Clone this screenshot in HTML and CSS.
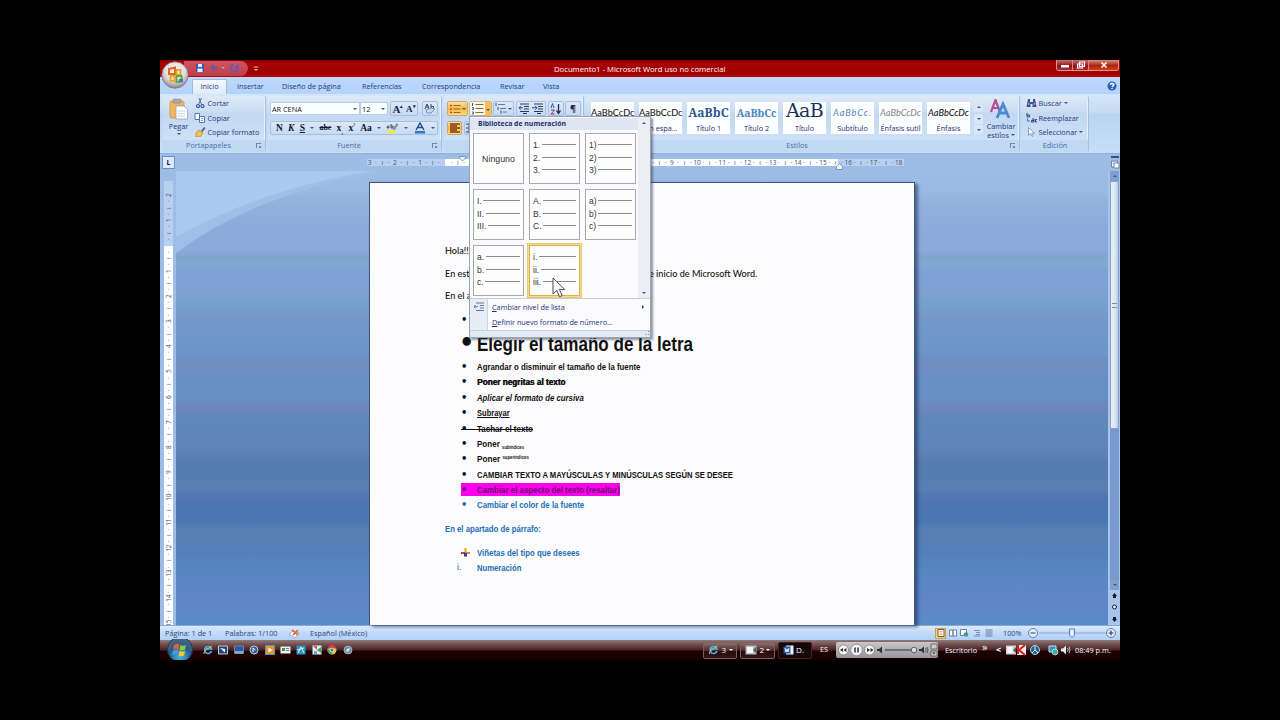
FILE: index.html
```html
<!DOCTYPE html>
<html lang="es">
<head>
  <meta charset="UTF-8">
  <title>Documento1 - Microsoft Word</title>
  <link rel="stylesheet" href="styles.css">
</head>
<body>
  <div class="desktop">
    <div class="orb">
      <svg width="30" height="30" viewBox="0 0 30 30">
        <defs><radialGradient id="orb" cx=".5" cy=".35" r=".65"><stop offset="0" stop-color="#fff"/><stop offset=".6" stop-color="#dcdce4"/><stop offset="1" stop-color="#8a8494"/></radialGradient></defs>
        <circle cx="15" cy="15" r="13.2" fill="url(#orb)" stroke="#9a6a70" stroke-width=".8"/>
        <g fill="none" stroke-width="2"><path d="M9 9l6-1.500v6.500h-6z" stroke="#e8641c"/><path d="M16.500 10h4v5h-4z" stroke="#f0a020"/><path d="M10.500 16h4v5h-4z" stroke="#e8b020"/><path d="M16.500 16h5v5.500l-5 .5z" stroke="#62a83a"/></g>
        <path d="M19 19h4v3h-4z" fill="#3f7fc8"/>
      </svg>
    </div>

    <div class="titlebar">
      <div class="quick">
        <svg width="60" height="12" viewBox="0 0 60 12">
          <path d="M3 2h8v8h-8z" fill="#3b57b8"/><path d="M5 2h4v3h-4zM4.500 6.500h5v3.500h-5z" fill="#e9eefc"/>
          <path d="M17 5l3.500-3v2c4 0 5 3 3 5.500 0-2.500-1-2.500-3-2.500v2z" fill="#6659a8"/><path d="M28 5h4l-2 2z" fill="#cf9aa6"/>
          <path d="M40.500 2.500c-3.500.5-4 6 0 7s5.500-3 3.500-5.500M45 1.500v3.500h-3.500" fill="none" stroke="#665aac" stroke-width="1.800"/>
        </svg>
      </div>
      <svg class="quick-more" width="6" height="6" viewBox="0 0 6 6"><path d="M1 1h4" stroke="#e9b8b8"/><path d="M1 3h4l-2 2z" fill="#e9b8b8"/></svg>
      <div class="title">Documento1 - Microsoft Word uso no comercial</div>
      <div class="winbtns">
        <span class="wb"><svg width="10" height="8" viewBox="0 0 10 8"><path d="M1 4h8v2.500h-8z" fill="#fff"/></svg></span>
        <span class="wb"><svg width="10" height="8" viewBox="0 0 10 8"><path d="M3.500 1h5v4.500h-5zM1.500 3h5v4h-5z" fill="#a33" stroke="#fff" stroke-width="1.200"/></svg></span>
        <span class="wb close"><svg width="10" height="8" viewBox="0 0 10 8"><path d="M2.500 1.500l5 5M7.500 1.500l-5 5" stroke="#fff" stroke-width="1.700"/></svg></span>
      </div>
    </div>

    <div class="tabs">
      <span class="tab active">Inicio</span>
      <span class="tab t2">Insertar</span>
      <span class="tab t3">Diseño de página</span>
      <span class="tab t4">Referencias</span>
      <span class="tab t5">Correspondencia</span>
      <span class="tab t6">Revisar</span>
      <span class="tab t7">Vista</span>
      <svg class="help" width="10" height="10" viewBox="0 0 10 10"><circle cx="5" cy="5" r="4.500" fill="#2f62bd"/><path d="M3 3.500q2-2 4 0l-2 2.500M5 7v1" stroke="#fff" stroke-width="1.300" fill="none"/></svg>
    </div>

    <div class="ribbon">
      <div class="group g-clip">
        <div class="body">
          <div class="paste">
            <svg width="22" height="23" viewBox="0 0 22 23"><rect x="2" y="3" width="14" height="17" rx="1.500" fill="#f0b65a" stroke="#c98a3a" stroke-width=".7"/><rect x="5" y="1" width="8" height="4" rx="1" fill="#a9a9b4" stroke="#77778a" stroke-width=".5"/><path d="M8 8h8l3.500 3.500v9.500h-11.500z" fill="#fbfcff" stroke="#8a9cc0" stroke-width=".7"/><path d="M10 13h7M10 15.500h7M10 18h7" stroke="#b9c6e0" stroke-width=".7"/></svg>
            <span>Pegar</span><i class="dn"></i>
          </div>
          <div class="list">
            <div><svg width="12" height="10" viewBox="0 0 12 10"><path d="M5 0l2.500 6.500M7.500 0l-3 6.500" stroke="#5a6f9c" fill="none"/><circle cx="4" cy="8" r="1.500" fill="none" stroke="#2b56b0" stroke-width="1.200"/><circle cx="8.500" cy="8" r="1.500" fill="none" stroke="#2b56b0" stroke-width="1.200"/></svg><span>Cortar</span></div>
            <div><svg width="12" height="10" viewBox="0 0 12 10"><path d="M1 .5h4.500v6h-4.500zM5.500 3.500h5v6h-5z" fill="#fff" stroke="#4a67a8" stroke-width=".9"/><path d="M7 5.500h2M7 7.500h2" stroke="#4a67a8" stroke-width=".7"/></svg><span>Copiar</span></div>
            <div class="fmt"><svg width="12" height="10" viewBox="0 0 12 10"><path d="M7 4l3-4 1.500 1-3 4z" fill="#5a5a70"/><path d="M2 6l3-3 4 3-3 4h-4z" fill="#f2c14a" stroke="#9b7a2a" stroke-width=".6"/></svg><span>Copiar formato</span></div>
          </div>
        </div>
        <div class="label">Portapapeles<b class="dlg"></b></div>
      </div>

      <div class="group g-font">
        <div class="row r1">
          <span class="combo name">AR CENA<i class="dn"></i></span>
          <span class="combo size">12<i class="dn"></i></span>
          <span class="box ab"><span class="serif big">A<sup>▴</sup></span><span class="serif small">A<sup>▾</sup></span></span>
          <span class="box clr"><svg width="14" height="11" viewBox="0 0 14 11"><path d="M2 6l2-5 2 5M3 4h3M8 1v5M8 3.500h2.500v2.500h-2.500" stroke="#3c4a6c" fill="none"/><path d="M3 7l5-2 4 1-4 4h-4z" fill="#cdd8ef" stroke="#5d76a8" stroke-width=".7"/></svg></span>
        </div>
        <div class="row r2">
          <span class="box biu">
            <b>N</b><b class="it">K</b><b class="un">S</b><i class="dn"></i><b class="st">abc</b><b>x<sub>₂</sub></b><b>x<sup>²</sup></b><b>Aa</b><i class="dn"></i>
            <svg width="13" height="12" viewBox="0 0 13 12"><path d="M1 5q2-3 2 1q-3 0-2-1M5 2v4h2v-2h-2" stroke="#333c58" fill="none" stroke-width=".9"/><path d="M6 7l5-6 1.500 1.500-4 6z" fill="#8a93a8"/><path d="M1 8.500h8v2.500h-8z" fill="#f6ee20"/></svg><i class="dn"></i>
            <svg width="12" height="12" viewBox="0 0 12 12"><path d="M2 8l4-7 4 7M4 5.500h4.500" stroke="#24458e" stroke-width="1.400" fill="none"/><path d="M1 9h10v2.500h-10z" fill="#2f7cc8"/></svg><i class="dn"></i>
          </span>
        </div>
        <div class="label">Fuente<b class="dlg"></b></div>
      </div>

      <div class="group g-par">
        <div class="row r1">
          <span class="pb hot bul"><svg width="12" height="10" viewBox="0 0 12 10"><path d="M1 1.500h2M1 5h2M1 8.500h2" stroke="#a4571a" stroke-width="1.600"/><path d="M4.500 1.500h7M4.500 5h7M4.500 8.500h7" stroke="#8d6a40"/></svg><i class="dn"></i></span>
          <span class="pb num"><svg width="14" height="12" viewBox="0 0 14 12"><path d="M1.500 0v3M1 4.500h1.500v2h-1.500M1 9h1.500v2h-1.500" stroke="#33508c" fill="none" stroke-width=".9"/><path d="M4.500 1.500h8M4.500 5.500h8M4.500 9.500h8" stroke="#6c6c60"/></svg><em><i class="dn"></i></em></span>
          <span class="pb mul"><svg width="13" height="11" viewBox="0 0 13 11"><path d="M1 0v3M3 4v3M6 7.500v3" stroke="#33508c"/><path d="M3 1.500h7M5 5.500h6M8 9h4" stroke="#6a7896"/></svg><i class="dn"></i></span>
          <span class="pb ind">
            <svg width="12" height="11" viewBox="0 0 12 11"><path d="M2 1h9M6 3.500h5M6 6h5M2 8.500h9M5 10.500h4" stroke="#2d3652" stroke-width="1.200"/><path d="M5 4.700h-4M3 2.800l-2 2 2 2" stroke="#2d4ea0" fill="none"/></svg>
            <svg width="12" height="11" viewBox="0 0 12 11"><path d="M2 1h9M6 3.500h5M6 6h5M2 8.500h9M5 10.500h4" stroke="#2d3652" stroke-width="1.200"/><path d="M0 4.700h5M3 2.800l2 2-2 2" stroke="#2d4ea0" fill="none"/></svg>
          </span>
          <span class="pb srt"><svg width="12" height="12" viewBox="0 0 12 12"><path d="M1 5l1.500-4.500 1.500 4.500" stroke="#2a55b4" fill="none"/><path d="M1 7h3.500l-3.500 4h3.500" stroke="#9a2c50" fill="none"/><path d="M8.500 1v9M6.500 7.500l2 3 2-3" stroke="#222c48" fill="none" stroke-width="1.300"/></svg></span>
          <span class="pb pil">¶</span>
        </div>
        <div class="row r2">
          <span class="pb hot sq"><svg width="12" height="11" viewBox="0 0 12 11"><path d="M1 1h10M1 3h7M1 5h10M1 7h7M1 9h10" stroke="#7c3a14" stroke-width="1.300"/></svg></span>
          <span class="pb sq plain"><svg width="12" height="11" viewBox="0 0 12 11"><path d="M1 1h10M3 3h6M1 5h10M3 7h6M1 9h10" stroke="#2d3652"/></svg></span>
        </div>
        <div class="label">&nbsp;</div>
      </div>

      <div class="group g-sty">
        <div class="body">
          <div class="tiles">
            <div class="tile"><p>AaBbCcDc</p><span>&nbsp;</span></div>
            <div class="tile"><p>AaBbCcDc</p><span>Sin espa...</span></div>
            <div class="tile h1"><p>AaBbC</p><span>Título 1</span></div>
            <div class="tile h2"><p>AaBbCc</p><span>Título 2</span></div>
            <div class="tile tt"><p>AaB</p><span>Título</span></div>
            <div class="tile sb"><p>AaBbCc.</p><span>Subtítulo</span></div>
            <div class="tile es"><p>AaBbCcDc</p><span>Énfasis sutil</span></div>
            <div class="tile em"><p>AaBbCcDc</p><span>Énfasis</span></div>
          </div>
          <div class="spin"><b><i class="up"></i></b><b><i class="dn"></i></b><b><i class="dn"></i></b></div>
          <div class="change">
            <svg width="24" height="21" viewBox="0 0 24 21"><path d="M2 13l4.500-12 4.500 12M3.500 9h6" fill="none" stroke="#b54c9c" stroke-width="2.200"/><path d="M8 19l6-14 6 14M10 14h8" fill="none" stroke="#4a8ad0" stroke-width="2.800"/></svg>
            <span>Cambiar</span><span>estilos <i class="dn"></i></span>
          </div>
        </div>
        <div class="label">Estilos<b class="dlg"></b></div>
      </div>

      <div class="group g-edit">
        <div class="list">
          <div><svg width="11" height="10" viewBox="0 0 11 10"><path d="M2 1h2v3h3v-3h2l1.500 8h-4v-3h-2v3h-4z" fill="#3d5590"/><path d="M2 6h1.500M7.500 6h1.500" stroke="#dfe9fa"/></svg><span>Buscar <i class="dn"></i></span></div>
          <div><svg width="11" height="10" viewBox="0 0 11 10"><path d="M1 0v4h2.500v-2h-2.500M6 6h2v3h-2.500v-1.500h2.500M11 6.500h-1.500v2.500h1.500" stroke="#33457c" fill="none"/><path d="M1.500 5.500v2.500h2.500" stroke="#3a7ad0" fill="none"/></svg><span>Reemplazar</span></div>
          <div><svg width="11" height="10" viewBox="0 0 11 10"><path d="M2.500 .5v8l2-2 1.500 3 1.200-.6-1.400-2.800h2.700z" fill="#fff" stroke="#7b8fb4" stroke-width=".8"/></svg><span>Seleccionar <i class="dn"></i></span></div>
        </div>
        <div class="label">Edición</div>
      </div>
    </div>

    <div class="hruler">
      <span class="tabsel">L</span>
      <div class="hscale" id="hscale"></div>
      <svg class="rbtn" width="10" height="16" viewBox="0 0 10 16"><path d="M1 2h8" stroke="#1f2f5c" stroke-width="1.500"/><path d="M1.500 6h6v6h-6z" fill="#e8f0fc" stroke="#7285a8"/><path d="M4 8h5v5h-5z" fill="#fff" stroke="#7285a8"/></svg>
      <svg class="mark m1" width="7" height="6" viewBox="0 0 7 6"><path d="M.5 .5h6v1.500l-3 3-3-3z" fill="#eef4fc" stroke="#6c82a8" stroke-width=".8"/></svg>
      <svg class="mark m2" width="7" height="7" viewBox="0 0 7 7"><path d="M.5 6.500v-3l3-3 3 3v3z" fill="#eef4fc" stroke="#6c82a8" stroke-width=".8"/></svg>
    </div>

    <div class="work">
      <div class="vruler"><div class="vscale" id="vscale"></div></div>
      <div class="canvas">
        <svg class="swoosh" width="210" height="86" viewBox="0 0 210 86"><path d="M0 0h210q-130 22-210 82z" fill="#9fbfe8"/><path d="M0 0h195q-110 18-195 66z" fill="#aac9ef"/></svg>
        <div class="page">
          <p class="cal hola">Hola!!</p>
          <p class="cal split"><span>En est</span><span class="tail">e inicio de Microsoft Word.</span></p>
          <p class="cal">En el a</p>
          <ul class="black">
            <li class="first"><i>•</i></li>
            <li class="large"><i>•</i><span data-w="216">Elegir el tamaño de la letra</span></li>
            <li class="l1"><i>•</i><span data-w="163">Agrandar o disminuir el tamaño de la fuente</span></li>
            <li class="l2"><i>•</i><span data-w="88">Poner negritas al texto</span></li>
            <li class="l3"><i>•</i><span data-w="107">Aplicar el formato de cursiva</span></li>
            <li class="l4"><i>•</i><span data-w="33">Subrayar</span></li>
            <li class="l5"><i>•</i><span data-w="56">Tachar el texto</span></li>
            <li><i>•</i><span data-w="47">Poner <small class="lo">subíndices</small></span></li>
            <li><i>•</i><span data-w="52">Poner <small class="hi">superíndices</small></span></li>
            <li class="l8"><i>•</i><span data-w="256">CAMBIAR TEXTO A MAYÚSCULAS Y MINÚSCULAS SEGÚN SE DESEE</span></li>
            <li class="l9"><i>•</i><span data-w="143">Cambiar el aspecto del texto (resaltar)</span></li>
            <li class="l10"><i>•</i><span data-w="107">Cambiar el color de la fuente</span></li>
          </ul>
          <p class="sec"><span data-w="96">En el apartado de párrafo:</span></p>
          <ul class="blue">
            <li class="l11"><i><svg width="9" height="9" viewBox="0 0 9 9"><path d="M3.500 0h2v4h-2z" fill="#e8a030"/><path d="M0 4h4.500v2h-4.500z" fill="#c83c3c"/><path d="M4.500 4h4.500v2h-4.500z" fill="#c8a020"/><path d="M3 5h3v3.500h-3z" fill="#343c9c"/></svg></i><span data-w="103">Viñetas del tipo que desees</span></li>
            <li class="l12"><i class="rom">i.</i><span data-w="44">Numeración</span></li>
          </ul>
        </div>
      </div>
      <div class="vbar">
        <b class="sbtn"><i class="up"></i></b>
        <div class="track"><div class="thumb"><u></u></div></div>
        <b class="sbtn"><i class="dn"></i></b>
        <svg width="9" height="35" viewBox="0 0 9 35"><path d="M2 6l2.500-3 2.500 3zM3 6h3v2h-3z" fill="#14203c"/><circle cx="4.500" cy="17" r="2" fill="#dfe9f8" stroke="#14203c"/><path d="M2 29l2.500 3 2.500-3zM3 27h3v2h-3z" fill="#14203c"/></svg>
      </div>
    </div>

    <div class="status">
      <span class="s1">Página: 1 de 1</span>
      <span class="s2">Palabras: 1/100</span>
      <svg class="s3" width="13" height="11" viewBox="0 0 13 11"><path d="M1 6l4-3 6 2-4 5z" fill="#fff" stroke="#8a8aa0" stroke-width=".7"/><path d="M4 2l6 5M10 2l-5 5" stroke="#e0602c" stroke-width="1.600"/></svg>
      <span class="s4">Español (México)</span>
      <div class="views">
        <b class="on"><svg width="8" height="8" viewBox="0 0 8 8"><path d="M1 .5h6v7h-6z" fill="#fff" stroke="#805818"/><path d="M2.500 2.500h3M2.500 4h3M2.500 5.500h3" stroke="#9c8050" stroke-width=".6"/></svg></b>
        <b><svg width="8" height="8" viewBox="0 0 8 8"><path d="M.5 1h3.500v6h-3.500zM4 1h3.500v6h-3.500z" fill="#fff" stroke="#6b7fa8"/></svg></b>
        <b><svg width="9" height="8" viewBox="0 0 9 8"><path d="M.5 .5h6v6h-6z" fill="#fff" stroke="#6b7fa8"/><circle cx="6" cy="5.500" r="2.300" fill="#4a9a78"/></svg></b>
        <b><svg width="8" height="8" viewBox="0 0 8 8"><path d="M1 1.500h6M3 3.500h4M3 5.500h4M1 7h6" stroke="#6b7fa8" stroke-width=".8"/></svg></b>
        <b><svg width="8" height="8" viewBox="0 0 8 8"><path d="M.5 1h7M.5 3h7M.5 5h7M.5 7h7" stroke="#5b6f98" stroke-width=".9"/></svg></b>
      </div>
      <span class="pct">100%</span>
      <svg class="zoom" width="90" height="12" viewBox="0 0 90 12"><path d="M12 6h68" stroke="#7d9ccc" stroke-width=".8"/><g fill="#e4eefb" stroke="#4d648f" stroke-width=".8"><circle cx="6" cy="6" r="4.500"/><circle cx="84" cy="6" r="4.500"/><path d="M42.500 2h5v6l-2.500 2.500-2.500-2.500z"/></g><path d="M3.500 6h5M81.500 6h5M84 3.500v5" stroke="#2c4474" stroke-width="1.200"/></svg>
    </div>

    <div class="taskbar">
      <div class="start"><svg width="30" height="22" viewBox="0 0 30 22">
        <defs><radialGradient id="st" cx=".5" cy=".8" r=".8"><stop offset="0" stop-color="#48b8e0"/><stop offset=".55" stop-color="#275a88"/><stop offset="1" stop-color="#56687c"/></radialGradient></defs>
        <circle cx="15" cy="10.500" r="12.500" fill="url(#st)" stroke="#26344c"/>
        <path d="M9 6q3-2 5.500-.5l-1 5q-3-1.500-5.500 0z" fill="#e8602c"/><path d="M15.500 6q3 1.500 5.500 0l-1 4.500q-2.500 1.500-5.500.5z" fill="#8cc83c"/><path d="M8 11.500q3-1.500 5.500 0l-1 4.500q-2.500-1.500-5.500 0z" fill="#3c9ce8"/><path d="M14.500 12q3 1 5.500 0l-1 4.500q-2.500 1.200-5.500 0z" fill="#f4cc30"/>
      </svg></div>
      <div class="launch">
        <svg width="10" height="10" viewBox="0 0 10 10"><path d="M8.500 6a3.500 3.500 0 1 1 0-2h-6" stroke="#4ab0f0" stroke-width="1.700" fill="none"/><path d="M1 9q-1-3 8-8" stroke="#e8c050" fill="none"/></svg>
        <svg width="10" height="10" viewBox="0 0 10 10"><path d="M.5 1h9v8h-9z" fill="#2a4470" stroke="#b8c8e0"/><path d="M2 3l5 1v3.500z" fill="#fff"/></svg>
        <svg width="10" height="10" viewBox="0 0 10 10"><path d="M.5 1h9v7.500h-9z" fill="#2858a8" stroke="#7088a8"/><path d="M1 6h8v2.500h-8z" fill="#88a4cc"/></svg>
        <svg width="10" height="10" viewBox="0 0 10 10"><circle cx="5" cy="5" r="4" fill="#2c5c94" stroke="#b8c8d8"/><path d="M4 7v-4l2.500 2" stroke="#fff" fill="none"/></svg>
        <svg width="10" height="10" viewBox="0 0 10 10"><path d="M.5 .5h9v9h-9z" fill="#e8942c" stroke="#5898c0"/><path d="M3.500 2.500l4 2.500-4 2.500z" fill="#fff"/></svg>
        <svg width="11" height="10" viewBox="0 0 11 10"><path d="M.5 1.500h10v7h-10z" fill="#f0f4f0"/><path d="M2 3h3v3h-3z" fill="#3c9060"/><path d="M6 3.500h3M6 5.500h3" stroke="#707890"/></svg>
        <svg width="10" height="10" viewBox="0 0 10 10"><path d="M.5 .5h9v9h-9z" fill="#2c98c0"/><path d="M2 8l3-6 3 6M1 5l7-2" stroke="#d8f0f8" fill="none"/></svg>
        <svg width="10" height="10" viewBox="0 0 10 10"><path d="M.5 .5h9v9h-9z" fill="#e4f0e8"/><path d="M1 1h4v4z" fill="#e04c70"/><path d="M5 5l4-3v6z" fill="#38a078"/><path d="M2 6h3v3h-3z" fill="#60a8e0"/></svg>
        <svg width="10" height="10" viewBox="0 0 10 10"><circle cx="5" cy="5" r="4.500" fill="#e8c030"/><path d="M.7 3.500a4.500 4.500 0 0 1 8.600 0z" fill="#dc3c2c"/><path d="M.6 4a4.500 4.500 0 0 0 4 5.500l1-3z" fill="#3ca04c"/><circle cx="5" cy="5" r="2" fill="#3878d0" stroke="#fff" stroke-width=".7"/></svg>
        <svg width="10" height="10" viewBox="0 0 10 10"><circle cx="5" cy="5" r="4" fill="#6c8ca8" stroke="#a8b8c8" stroke-width=".8"/><path d="M3 7l1-3 3-1-1 3z" fill="#e8eef4"/></svg>
      </div>
      <div class="tasks">
        <span class="task"><svg width="11" height="10" viewBox="0 0 10 10"><path d="M8.500 6a3.500 3.500 0 1 1 0-2h-6" stroke="#4ab0f0" stroke-width="1.700" fill="none"/><path d="M1 9q-1-3 8-8" stroke="#e8c050" fill="none"/></svg>3<i class="dn"></i></span>
        <span class="task"><svg width="12" height="10" viewBox="0 0 12 10"><path d="M.5 .5h11v9h-11z" fill="#b8bcc4"/><path d="M2 2h6v6h-6z" fill="#f8f8f8"/><path d="M8 5l3-3v6z" fill="#50586c"/></svg>2<i class="dn"></i></span>
        <span class="task word"><svg width="11" height="10" viewBox="0 0 11 10"><path d="M3 .5h7.500v9h-7.500z" fill="#e8f0fc"/><path d="M.5 1.500h7v7h-7z" fill="#2c5cb0"/><path d="M2 3l1 4 1-3 1 3 1-4" stroke="#fff" fill="none" stroke-width=".9"/></svg>D.</span>
      </div>
      <span class="lang">ES</span>
      <div class="player"><svg width="102" height="16" viewBox="0 0 102 16"><g fill="#f4f4f4" stroke="#77777c" stroke-width=".7"><circle cx="7.500" cy="8" r="5"/><circle cx="20.500" cy="8" r="5.800"/><circle cx="33.500" cy="8" r="5"/></g><path d="M7 6v4l-3-2zM10.500 6v4l-3-2zM31 6v4l3-2zM34.500 6v4l3-2z" fill="#333"/><path d="M19 5.500v5M22 5.500v5" stroke="#333" stroke-width="1.500"/><path d="M41 7h2l3-2.500v7l-3-2.500h-2zM83 7h2l3-2.500v7l-3-2.500h-2z" fill="#333"/><path d="M49 8h26" stroke="#444" stroke-width="1.200"/><circle cx="78" cy="8" r="2.800" fill="#ddd" stroke="#444" stroke-width=".8"/><path d="M89.500 6q1.500 2 0 4M91 5q2 3 0 6" stroke="#333" stroke-width=".7" fill="none"/><path d="M95 2h6v5h-6zM95 9h6v5h-6z" fill="#ccc" stroke="#555" stroke-width=".8"/><path d="M96.500 10.500h3l-1.500 2z" fill="#222"/></svg></div>
      <span class="desk">Escritorio</span><span class="more">»</span><span class="less">&lt;</span>
      <svg class="tray" width="66" height="12" viewBox="0 0 66 12"><path d="M1 1.500h10v9h-10z" fill="#cfd3da"/><path d="M2.500 3h5v6h-5z" fill="#fff"/><path d="M8 6l3-3v6z" fill="#555"/><path d="M12 1h9v10h-9z" fill="#f4e8e4"/><path d="M13 1v9M20 1l-6 5 6 5" stroke="#d02020" stroke-width="2" fill="none"/><circle cx="30" cy="6" r="4.500" fill="#286098" stroke="#b8ccd8"/><path d="M30 2v4l3 3M30 6l-3 3" stroke="#d8f0e8" fill="none"/><path d="M44 2h7v6h-7z" fill="#3890c8" stroke="#c8dcf0"/><circle cx="50" cy="8" r="3" fill="#3cb0a0" stroke="#e0f0f0" stroke-width=".7"/><path d="M56 4.500h2l3-3v9l-3-3h-2z" fill="#e8e8ec"/><path d="M62.500 4q1.500 2 0 4M64 2.500q2 3.500 0 7" stroke="#dcdce4" fill="none" stroke-width=".8"/></svg>
      <span class="clock">08:49 p.m.</span>
    </div>

    <div class="gallery">
      <div class="cols">
        <div class="main">
          <div class="ghead">Biblioteca de numeración</div>
          <div class="cells">
            <div class="cell none">Ninguno</div>
            <div class="cell"><p>1.<u></u></p><p>2.<u></u></p><p>3.<u></u></p></div>
            <div class="cell"><p>1)<u></u></p><p>2)<u></u></p><p>3)<u></u></p></div>
            <div class="cell"><p>I.<u></u></p><p>II.<u></u></p><p>III.<u></u></p></div>
            <div class="cell"><p>A.<u></u></p><p>B.<u></u></p><p>C.<u></u></p></div>
            <div class="cell"><p>a)<u></u></p><p>b)<u></u></p><p>c)<u></u></p></div>
            <div class="cell"><p>a.<u></u></p><p>b.<u></u></p><p>c.<u></u></p></div>
            <div class="cell sel"><p>i.<u></u></p><p>ii.<u></u></p><p>iii.<u></u></p></div>
          </div>
        </div>
        <div class="gbar"><i class="up"></i><i class="dn"></i></div>
      </div>
      <div class="menu">
        <div class="micons"><svg width="11" height="9" viewBox="0 0 11 9"><path d="M2 1h8M6 3.500h4M6 6h4M2 8.500h8" stroke="#56688c" stroke-width=".9"/><path d="M0 4.700h4M1.500 3l-1.500 1.700 1.500 1.700" stroke="#2d62c0" fill="none" stroke-width=".8"/></svg></div>
        <div class="mitems">
          <div class="mi1"><span><u>C</u>ambiar nivel de lista</span><i class="rt"></i></div>
          <div class="mi2"><span><u>D</u>efinir nuevo formato de número...</span></div>
        </div>
      </div>
      <div class="gfoot"><svg width="7" height="5" viewBox="0 0 7 5"><path d="M5 0h1.500v1h-1.500zM2.500 3h1.500v1h-1.500zM5 3h1.500v1h-1.500z" fill="#8898b8"/></svg></div>
    </div>
    <svg class="cursor" width="14" height="22" viewBox="0 0 14 22"><path d="M1 1v16l3.800-3.600 2.700 6.300 2.600-1.100-2.700-6.200h5.300z" fill="#fff" stroke="#444a5c"/></svg>
  </div>

  <script>
    // rulers: one cell per centimetre
    function fill(id, from, to) {
      let html = "";
      for (let n = from; n <= to; n++) {
        const label = n === 0 ? "" : Math.abs(n);
        html += '<span class="cm"><b>' + label + "</b><s>·</s><s>ı</s><s>·</s></span>";
      }
      document.getElementById(id).innerHTML = html;
    }
    fill("hscale", -3, 18);
    fill("vscale", -2, 15);

    // condense the document lines to their set width
    document.querySelectorAll("[data-w]").forEach(function (el) {
      el.style.transform = "scaleX(" + el.dataset.w / el.offsetWidth + ")";
    });
  </script>
</body>
</html>
```
FILE: styles.css
```css
* {
  box-sizing: border-box;
}
body {
  margin: 0;
  background: #000;
  width: 1280px;
  height: 720px;
  overflow: hidden;
  font-family: "Open Sans", "Noto Sans", sans-serif;
  font-size: 7.3px;
  font-weight: 500;
  line-height: 10px;
  color: #1f3a7a;
}
p, ul {
  margin: 0;
  padding: 0;
}
svg {
  display: block;
  flex: none;
}
.desktop {
  position: relative;
  width: 960px;
  height: 600px;
  margin: 60px 160px;
  display: flex;
  flex-direction: column;
  overflow: hidden;
  white-space: nowrap;
}
.dn, .up, .rt {
  display: inline-block;
  width: 0;
  height: 0;
  border: 2px solid transparent;
  border-top-color: #3d5788;
  border-bottom-width: 0;
}
.up {
  border: 2px solid transparent;
  border-bottom-color: #3d5788;
  border-top-width: 0;
}
.rt {
  border: 2.500px solid transparent;
  border-left-color: #24407c;
  border-right-width: 0;
}

/* title bar */
.orb {
  position: absolute;
  left: 0;
  top: 0;
  z-index: 3;
}
.titlebar {
  height: 17px;
  background: linear-gradient(#7c0000, #a80404 3px, #a00000 12px, #b00808);
  display: flex;
  align-items: center;
  padding-left: 24px;
  flex: none;
}
.quick {
  width: 64px;
  height: 15px;
  padding: 1px 0 0 9px;
  border-radius: 0 8px 8px 0;
  background: linear-gradient(#cf5560, #c03c48);
}
.quick-more {
  margin-left: 5px;
}
.title {
  color: #fff;
  margin: 1px 0 0 295px;
  width: 180px;
  font-size: 7.7px;
}
.winbtns {
  display: flex;
  margin-left: auto;
  align-self: flex-start;
  border: 1px solid #e09090;
  border-top: 0;
  border-radius: 0 0 3px 3px;
  overflow: hidden;
  height: 11px;
  margin-right: 1px;
}
.wb {
  width: 16px;
  display: flex;
  justify-content: center;
  padding-top: 1px;
  background: linear-gradient(#c87070, #901010 60%, #a83030);
  border-right: 1px solid #d88;
}
.wb.close {
  width: 29px;
  border: 0;
  background: linear-gradient(#d89080, #b02010 55%, #d04020);
}

/* tabs */
.tabs {
  height: 17px;
  background: linear-gradient(#bcd8fb, #b5d3f8);
  display: flex;
  align-items: flex-end;
  flex: none;
}
.tab {
  padding-bottom: 3px;
}
.tab.active {
  margin-left: 32px;
  width: 35px;
  height: 15px;
  text-align: center;
  padding-top: 1px;
  background: linear-gradient(#f4f9ff, #dfebf9);
  border: 1px solid #9fbbe2;
  border-bottom: 0;
  border-radius: 2px 2px 0 0;
}
.t2 { margin-left: 10px; width: 45px; }
.t3 { width: 80px; }
.t4 { width: 60px; }
.t5 { width: 78px; }
.t6 { width: 43px; }
.help {
  margin: 0 3px 3px auto;
}

/* ribbon */
.ribbon {
  height: 60px;
  flex: none;
  padding: 2px 0 2px 3px;
  display: flex;
  gap: 2px;
  background: linear-gradient(#d6e6f8, #c6dbf4 18px, #bcd4f0 20px, #c6def8);
  border-bottom: 1px solid #8fb0dc;
}
.group {
  height: 56px;
  display: flex;
  flex-direction: column;
  border-right: 1px solid #a3bfe4;
  border-radius: 2px;
  box-shadow: inset -1px 0 #e4f0fc;
  background: linear-gradient(#dde9f7, #cbddf3 16px, #c3d8f1 17px, #d0e3fa);
}
.label {
  margin-top: auto;
  height: 12px;
  line-height: 11px;
  padding-right: 11px;
  background: #c1d8f2;
  color: #4a6ea6;
  text-align: center;
  position: relative;
}
.dlg {
  position: absolute;
  right: 4px;
  top: 3px;
  width: 5px;
  height: 5px;
  border-left: 1px solid #6a88b8;
  border-top: 1px solid #6a88b8;
}
.dlg::after {
  content: "";
  position: absolute;
  left: 2px;
  top: 2px;
  width: 2px;
  height: 2px;
  background: #6a88b8;
}
.body {
  display: flex;
}
.g-clip { width: 103px; }
.g-font { width: 174px; }
.g-par { width: 140px; }
.g-sty { width: 434px; }
.g-edit { width: 67px; }
.paste {
  width: 31px;
  display: flex;
  flex-direction: column;
  align-items: center;
  padding-top: 2px;
}
.paste span {
  line-height: 11px;
}
.paste .dn {
  margin-top: 1px;
}
.list > div {
  display: flex;
  align-items: center;
  height: 14.500px;
}
.list > div > span {
  margin-left: 1.500px;
}
.row {
  display: flex;
  align-items: center;
}
.g-font, .g-par {
  padding-top: 5px;
}
.g-font .row {
  padding-left: 2px;
}
.combo {
  height: 13px;
  background: #fbfdff;
  border: 1px solid #b5cdec;
  color: #111;
  line-height: 12px;
  display: flex;
  justify-content: space-between;
  align-items: center;
  padding: 0 2px 0 1px;
}
.name { width: 90px; }
.size { width: 28px; }
.box, .pb {
  border: 1px solid #a6c0e4;
  border-radius: 2px;
  display: flex;
  align-items: center;
  background: linear-gradient(#dbe8f8, #c6daf3);
}
.ab {
  margin-left: 2px;
  width: 28px;
  height: 15px;
  justify-content: space-around;
}
.clr {
  margin-left: 4px;
  width: 16px;
  height: 15px;
}
.serif {
  font-family: "Liberation Serif", serif;
  font-weight: bold;
  color: #1c2848;
  font-size: 11px;
}
.serif.small {
  font-size: 9px;
}
.serif sup {
  font-size: 5px;
  line-height: 0;
}
.g-font .r2 {
  margin-top: 5px;
}
.biu {
  height: 14px;
  width: 168px;
  padding: 0 2px 0 5px;
  justify-content: space-between;
  font-family: "Liberation Serif", serif;
  font-size: 9.5px;
  color: #111a30;
}
.biu sub, .biu sup {
  font-size: 6px;
  line-height: 0;
}
.it { font-style: italic; }
.un { text-decoration: underline; }
.st { text-decoration: line-through; font-size: 8px; }
.g-par .row {
  padding-left: 3px;
}
.g-par .r1 {
  height: 15px;
}
.pb {
  height: 15px;
  justify-content: space-evenly;
}
.hot {
  background: linear-gradient(#fce0a0, #fdb648 50%, #fedc78);
  border-color: #c9a86a;
}
.bul { width: 21px; }
.num {
  width: 23px;
  margin-left: 1px;
  background: #fdf6e0;
  border-color: #c9b88a;
  padding-left: 1px;
}
.num em {
  background: #fcbc58;
  height: 13px;
  width: 7px;
  padding: 1px 0 0 1px;
}
.mul { width: 21px; margin-left: 1px; }
.ind { width: 30px; margin-left: 2px; }
.srt { width: 16px; margin-left: 2px; }
.pil {
  width: 16px;
  margin-left: 1px;
  color: #1c2848;
  font-weight: bold;
  font-size: 9px;
}
.g-par .r2 {
  margin-top: 5px;
}
.sq { width: 15px; height: 14px; }
.plain { margin-left: 2px; width: 90px; justify-content: flex-start; }
.tiles {
  display: flex;
  gap: 5px;
  padding: 6px 0 0 5px;
}
.tile {
  width: 43px;
  height: 32px;
  background: #fdfeff;
  overflow: hidden;
  text-align: center;
  color: #2a2a78;
}
.tile p {
  height: 21px;
  line-height: 22px;
  color: #222;
  font-family: Lato, sans-serif;
  font-size: 9.2px;
}
.tile span {
  display: block;
  margin: 0 -4px;
}
.tile.h1 p, .tile.h2 p {
  font-family: "Noto Serif", "DejaVu Serif", serif;
  font-weight: bold;
  font-size: 12px;
  color: #2c5590;
  letter-spacing: .1px;
}
.tile.h2 p {
  font-size: 10.5px;
  color: #4c86c0;
  letter-spacing: -.1px;
}
.tile.tt p {
  font-family: "DejaVu Serif", serif;
  font-size: 19px;
  line-height: 17px;
  color: #1c3054;
  letter-spacing: -.6px;
}
.tile.sb p, .tile.es p, .tile.em p {
  font-style: italic;
}
.tile.sb p { color: #5a8fc4; letter-spacing: .9px; }
.tile.es p { color: #8c8c8c; }
.spin {
  padding: 6px 0 0 4px;
}
.spin b {
  display: flex;
  align-items: center;
  justify-content: center;
  width: 9px;
  height: 10px;
  margin-bottom: 1.500px;
  background: #d8e6f8;
  border-radius: 1px;
}
.change {
  width: 36px;
  display: flex;
  flex-direction: column;
  align-items: center;
  padding-top: 3px;
}
.change span {
  line-height: 8.500px;
}
.change svg {
  margin-bottom: 2px;
}
.change .dn, .list .dn {
  vertical-align: 2px;
}
.g-edit {
  padding-left: 4px;
}
.g-edit .label {
  margin-left: -4px;
  padding: 0;
}

/* rulers */
.hruler {
  height: 17px;
  flex: none;
  background: #9dbde6;
  display: flex;
  align-items: center;
  position: relative;
}
.tabsel {
  width: 13px;
  height: 13px;
  margin-left: 2px;
  border: 1px solid #6f8fc4;
  background: #dce9fa;
  font-weight: bold;
  font-size: 7px;
  line-height: 11px;
  color: #14203c;
  text-align: center;
}
.hscale {
  margin-left: 191.500px;
  display: flex;
  width: 537px;
  height: 7px;
  overflow: hidden;
  background: linear-gradient(90deg, #b8d0f0 78px, #fcfdff 78px, #fcfdff 471px, #b8d0f0 471px);
}
.cm {
  width: 25.200px;
  flex: none;
  display: flex;
  height: 7px;
  line-height: 7px;
  font-size: 6.5px;
  color: #45526c;
}
.cm b, .cm s {
  width: 6.300px;
  font-weight: 500;
  text-decoration: none;
  display: flex;
  justify-content: center;
}
.rbtn {
  margin-left: auto;
}
.mark {
  position: absolute;
  left: 299px;
  top: 2px;
}
.mark.m2 {
  left: 676px;
  top: 9px;
}
.vruler {
  width: 16px;
  padding: 10px 0 0 4px;
  background: #9dbde6;
  flex: none;
}
.vscale {
  width: 9px;
  height: 444px;
  padding-top: 11px;
  overflow: hidden;
  background: linear-gradient(#b8d0f0 65px, #fcfdff 65px);
}
.vscale .cm {
  width: 9px;
  height: 25.200px;
  flex-direction: column;
}
.vscale .cm b, .vscale .cm s {
  width: 9px;
  height: 6.300px;
  align-items: center;
  transform: rotate(-90deg);
}

/* document */
.work {
  flex: 1;
  min-height: 0;
  display: flex;
}
.canvas {
  flex: 1;
  position: relative;
  padding: 11px 0 0 193px;
  background: linear-gradient(#9dbde6 0, #9abae4 20px, #92b3dd 30px, #8caadb 56px, #8caadb 80px, #82a5cb 86px, #81a8d6 94px, #7fa0d5 102px, #7da0d3 122px, #75a0cc 132px, #7597c9 149px, #6e97cd 169px, #6a95c8 184px, #718dbf 189px, #6d90c5 202px, #658fc6 209px, #6690c6 226px, #6d86b7 237px, #5d88bb 249px, #5f85bc 272px, #6080b7 282px, #557db1 291px, #587eb2 319px, #5576b0 324px, #4b76b3 332px, #4c76b3 352px, #5680b2 359px, #547fb8 376px, #5687c0 402px, #5b86c6 412px, #5f86c8 439px, #5a8bc9 449px);
}
.swoosh {
  position: absolute;
  left: 0;
  top: 0;
}
.page {
  position: relative;
  width: 546px;
  height: 443px;
  background: #fcfbfd;
  border: 1px solid #3f5478;
  border-bottom: 0;
  box-shadow: 3px 2px 3px rgba(30, 50, 90, .6);
  padding: 56px 0 0 75px;
  color: #111;
}
.cal {
  font-family: Lato, sans-serif;
  font-size: 9.1px;
  height: 22.600px;
  line-height: 23px;
}
.split {
  display: flex;
}
.tail {
  margin-left: auto;
  width: 265px;
}
.page ul {
  list-style: none;
}
.page ul, .sec {
  font-family: "Liberation Sans", sans-serif;
  font-weight: bold;
  font-size: 9.6px;
}
.black {
  padding-top: 5px;
}
[data-w] {
  display: inline-block;
  transform-origin: left center;
}
.page li {
  display: flex;
  align-items: flex-start;
  height: 15.350px;
  line-height: 15.350px;
}
.page li i {
  margin-left: 16px;
  width: 16px;
  font-style: normal;
  font-family: "DejaVu Sans", sans-serif;
  font-size: 10px;
  flex: none;
}
.page li.large {
  height: 32px;
  line-height: 33px;
  font-size: 21px;
}
.page li.large i {
  font-size: 24px;
  margin-left: 14px;
  width: 18px;
}
.l2 span { text-shadow: .5px 0 #111; }
.l3 span { font-style: italic; }
.l4 span { text-decoration: underline; }
.page .l5 span {
  text-decoration: line-through;
}
.page .l5 i {
  background: linear-gradient(#111, #111) no-repeat 0 8px / 16px 1px;
}
.page small {
  font-size: 5px;
  position: relative;
}
.lo { top: 2px; }
.hi { top: -3px; }
.page .l9 {
  background: #f0e;
  height: 13px;
  line-height: 14px;
  margin: 1px 0 1.350px 16px;
  width: 159px;
  color: #6c0070;
}
.page .l9 i {
  margin-left: 0;
}
.page .l10, .page .sec, .page .blue {
  color: #1b70b4;
}
.sec {
  height: 32px;
  line-height: 32px;
}
.l11 i {
  padding-top: 3px;
}
.page li .rom {
  margin-left: 12px;
  width: 20px;
  font-family: inherit;
  font-size: 9px;
  font-weight: normal;
}

.vbar {
  width: 12px;
  padding: 0 1px 0 2px;
  background: #a9c4ea;
  display: flex;
  flex-direction: column;
}
.sbtn {
  height: 10px;
  background: #7f9fce;
  display: flex;
  align-items: center;
  justify-content: center;
}
.track {
  flex: 1;
  background: #7899cc;
}
.thumb {
  height: 248px;
  background: linear-gradient(90deg, #e8eef8, #dde6f4 60%, #b4c8e4);
  border: 1px solid #8aa2c8;
  display: flex;
  align-items: center;
  justify-content: center;
}
.thumb u {
  width: 5px;
  height: 5px;
  border: solid #7c8ca8;
  border-width: 1px 0;
}

/* status bar */
.status {
  height: 15px;
  flex: none;
  background: linear-gradient(#dbe9fb, #c2dafa 50%, #b3d0f6);
  border-top: 1px solid #88a8d8;
  display: flex;
  align-items: center;
  padding-left: 5px;
  color: #2c4678;
}
.s1 { width: 60px; }
.s2 { width: 63px; }
.s4 { margin-left: 9px; }
.views {
  display: flex;
  gap: 1px;
  margin-left: auto;
}
.views b {
  width: 11px;
  height: 11px;
  display: flex;
  align-items: center;
  justify-content: center;
}
.views .on {
  background: #fcd080;
  border: 1px solid #c8a050;
}
.pct {
  width: 24px;
  margin-left: 9px;
}
.zoom {
  margin-right: 3px;
}

/* taskbar */
.taskbar {
  height: 20px;
  flex: none;
  background: linear-gradient(#937a7a, #6b4a4a 5px, #4a2323 10px, #1e0000 11px, #170000);
  display: flex;
  align-items: center;
  color: #fff;
}
.start {
  width: 36px;
  padding-left: 5px;
  overflow: hidden;
}
.launch {
  display: flex;
  margin-left: 7px;
  gap: 5.400px;
}
.tasks {
  display: flex;
  gap: 3px;
  margin-left: auto;
}
.task {
  width: 34.500px;
  height: 17px;
  border: 1px solid #7c5c5c;
  border-radius: 2px;
  background: linear-gradient(#8c7070, #502c2c 50%, #280808 51%, #341414);
  display: flex;
  align-items: center;
  justify-content: space-between;
  padding: 0 3px 0 4px;
  font-size: 8px;
}
.task .dn {
  border-top-color: #fff;
}
.task.word {
  background: #140808;
  border-color: #3c2424;
  padding-right: 7px;
}
.lang {
  margin: -3px 0 0 8px;
  width: 16px;
}
.player {
  background: linear-gradient(#c8c8cc, #96969a);
  height: 16px;
  border-radius: 2px;
}
.desk {
  margin-left: 7px;
  width: 37px;
}
.more {
  font-size: 11px;
  margin-top: -6px;
  width: 14px;
}
.less {
  font-weight: bold;
  font-size: 9px;
  width: 9px;
}
.clock {
  width: 45px;
  margin-left: 4px;
}

/* numbering gallery */
.gallery {
  position: absolute;
  left: 309px;
  top: 56px;
  width: 182px;
  height: 222px;
  background: #fbfbfd;
  border: 1px solid #98a4b8;
  box-shadow: 2px 2px 2px rgba(40, 50, 70, .5);
  z-index: 4;
}
.cols {
  display: flex;
  height: 181px;
}
.main {
  width: 168px;
}
.ghead {
  height: 12px;
  margin-top: 1px;
  line-height: 12px;
  padding-left: 8px;
  background: #dde6f2;
  font-weight: bold;
  color: #22306c;
  font-size: 6.9px;
}
.cells {
  display: grid;
  grid-template-columns: 51px 51px 51px;
  grid-auto-rows: 51px;
  gap: 5px;
  padding: 3px 0 0 3px;
}
.cell {
  border: 1px solid #a9a9ad;
  background: #fdfdfe;
  padding: 5px 3px 0 3px;
  color: #333;
  font-family: "Liberation Sans", sans-serif;
  font-size: 8.5px;
}
.cell p {
  height: 12.700px;
  line-height: 12.700px;
  display: flex;
  align-items: flex-start;
}
.cell u {
  flex: 1;
  margin: 5px 0 0 1.500px;
  height: 1px;
  background: #8c8c90;
}
.cell.none {
  display: flex;
  align-items: center;
  justify-content: center;
  padding: 0;
  font-size: 8.8px;
}
.cell.sel {
  border-color: #d8b24c;
  box-shadow: 0 0 0 1.500px #f6dc8a, 0 0 0 2px #d8b860;
}
.gbar {
  width: 12px;
  background: #eceef3;
  display: flex;
  flex-direction: column;
  justify-content: space-between;
  align-items: center;
  padding: 5px 0 4px;
}
.menu {
  display: flex;
  height: 32px;
  border-top: 1px solid #c8ccd8;
}
.micons {
  width: 18px;
  background: #e7edf5;
  border-right: 1px solid #ccd4e0;
  padding: 3px 0 0 4px;
}
.mitems {
  flex: 1;
  padding: 1px 6px 0 4px;
}
.mitems div {
  height: 14.800px;
  display: flex;
  align-items: center;
  justify-content: space-between;
  color: #262e7c;
}
.gfoot {
  height: 7px;
  background: #e4eaf3;
  border-top: 1px solid #c8d0de;
  display: flex;
  justify-content: flex-end;
}
.cursor {
  position: absolute;
  left: 392px;
  top: 217px;
  z-index: 5;
}
```
